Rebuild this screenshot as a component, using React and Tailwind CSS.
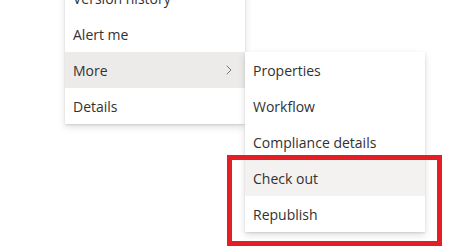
import React from 'react';
import { ChevronRight } from 'lucide-react';

const mainItems = ['Version history', 'Alert me', 'More', 'Details'];
const moreItems = ['Properties', 'Workflow', 'Compliance details', 'Check out', 'Republish'];

const menuShadow = 'shadow-[0_3.2px_7.2px_rgba(0,0,0,0.132),0_0.6px_1.8px_rgba(0,0,0,0.108)]';

const App = () => {
    return (
        <div className="relative w-[473px] h-[248px] overflow-hidden bg-white font-['Open_Sans',sans-serif] text-[14px] text-[#323130]">
            <div className="flex items-start pl-[65px]">
                {/* Main context menu */}
                <div className={`w-[180px] mt-[-20px] bg-white ${menuShadow}`}>
                    {mainItems.map(item => (
                        <div
                            key={item}
                            className={`h-9 flex items-center justify-between px-2 ${item === 'More' ? 'bg-[#edebe9]' : ''}`}
                        >
                            <span>{item}</span>
                            {item === 'More' && <ChevronRight size={16} strokeWidth={1.25} className="text-[#605e5c]" />}
                        </div>
                    ))}
                </div>

                {/* Submenu */}
                <div className={`w-[180px] mt-[52px] bg-white ${menuShadow}`}>
                    {moreItems.map(item => (
                        <div
                            key={item}
                            className={`h-9 flex items-center px-2 ${item === 'Check out' ? 'bg-[#f3f2f1]' : ''}`}
                        >
                            {item}
                        </div>
                    ))}
                </div>
            </div>

            {/* Annotation highlight */}
            <div className="absolute left-[227px] top-[155px] w-[215px] h-[91px] border-[5px] border-[#e41e25] pointer-events-none" />
        </div>
    );
};

export default App;
